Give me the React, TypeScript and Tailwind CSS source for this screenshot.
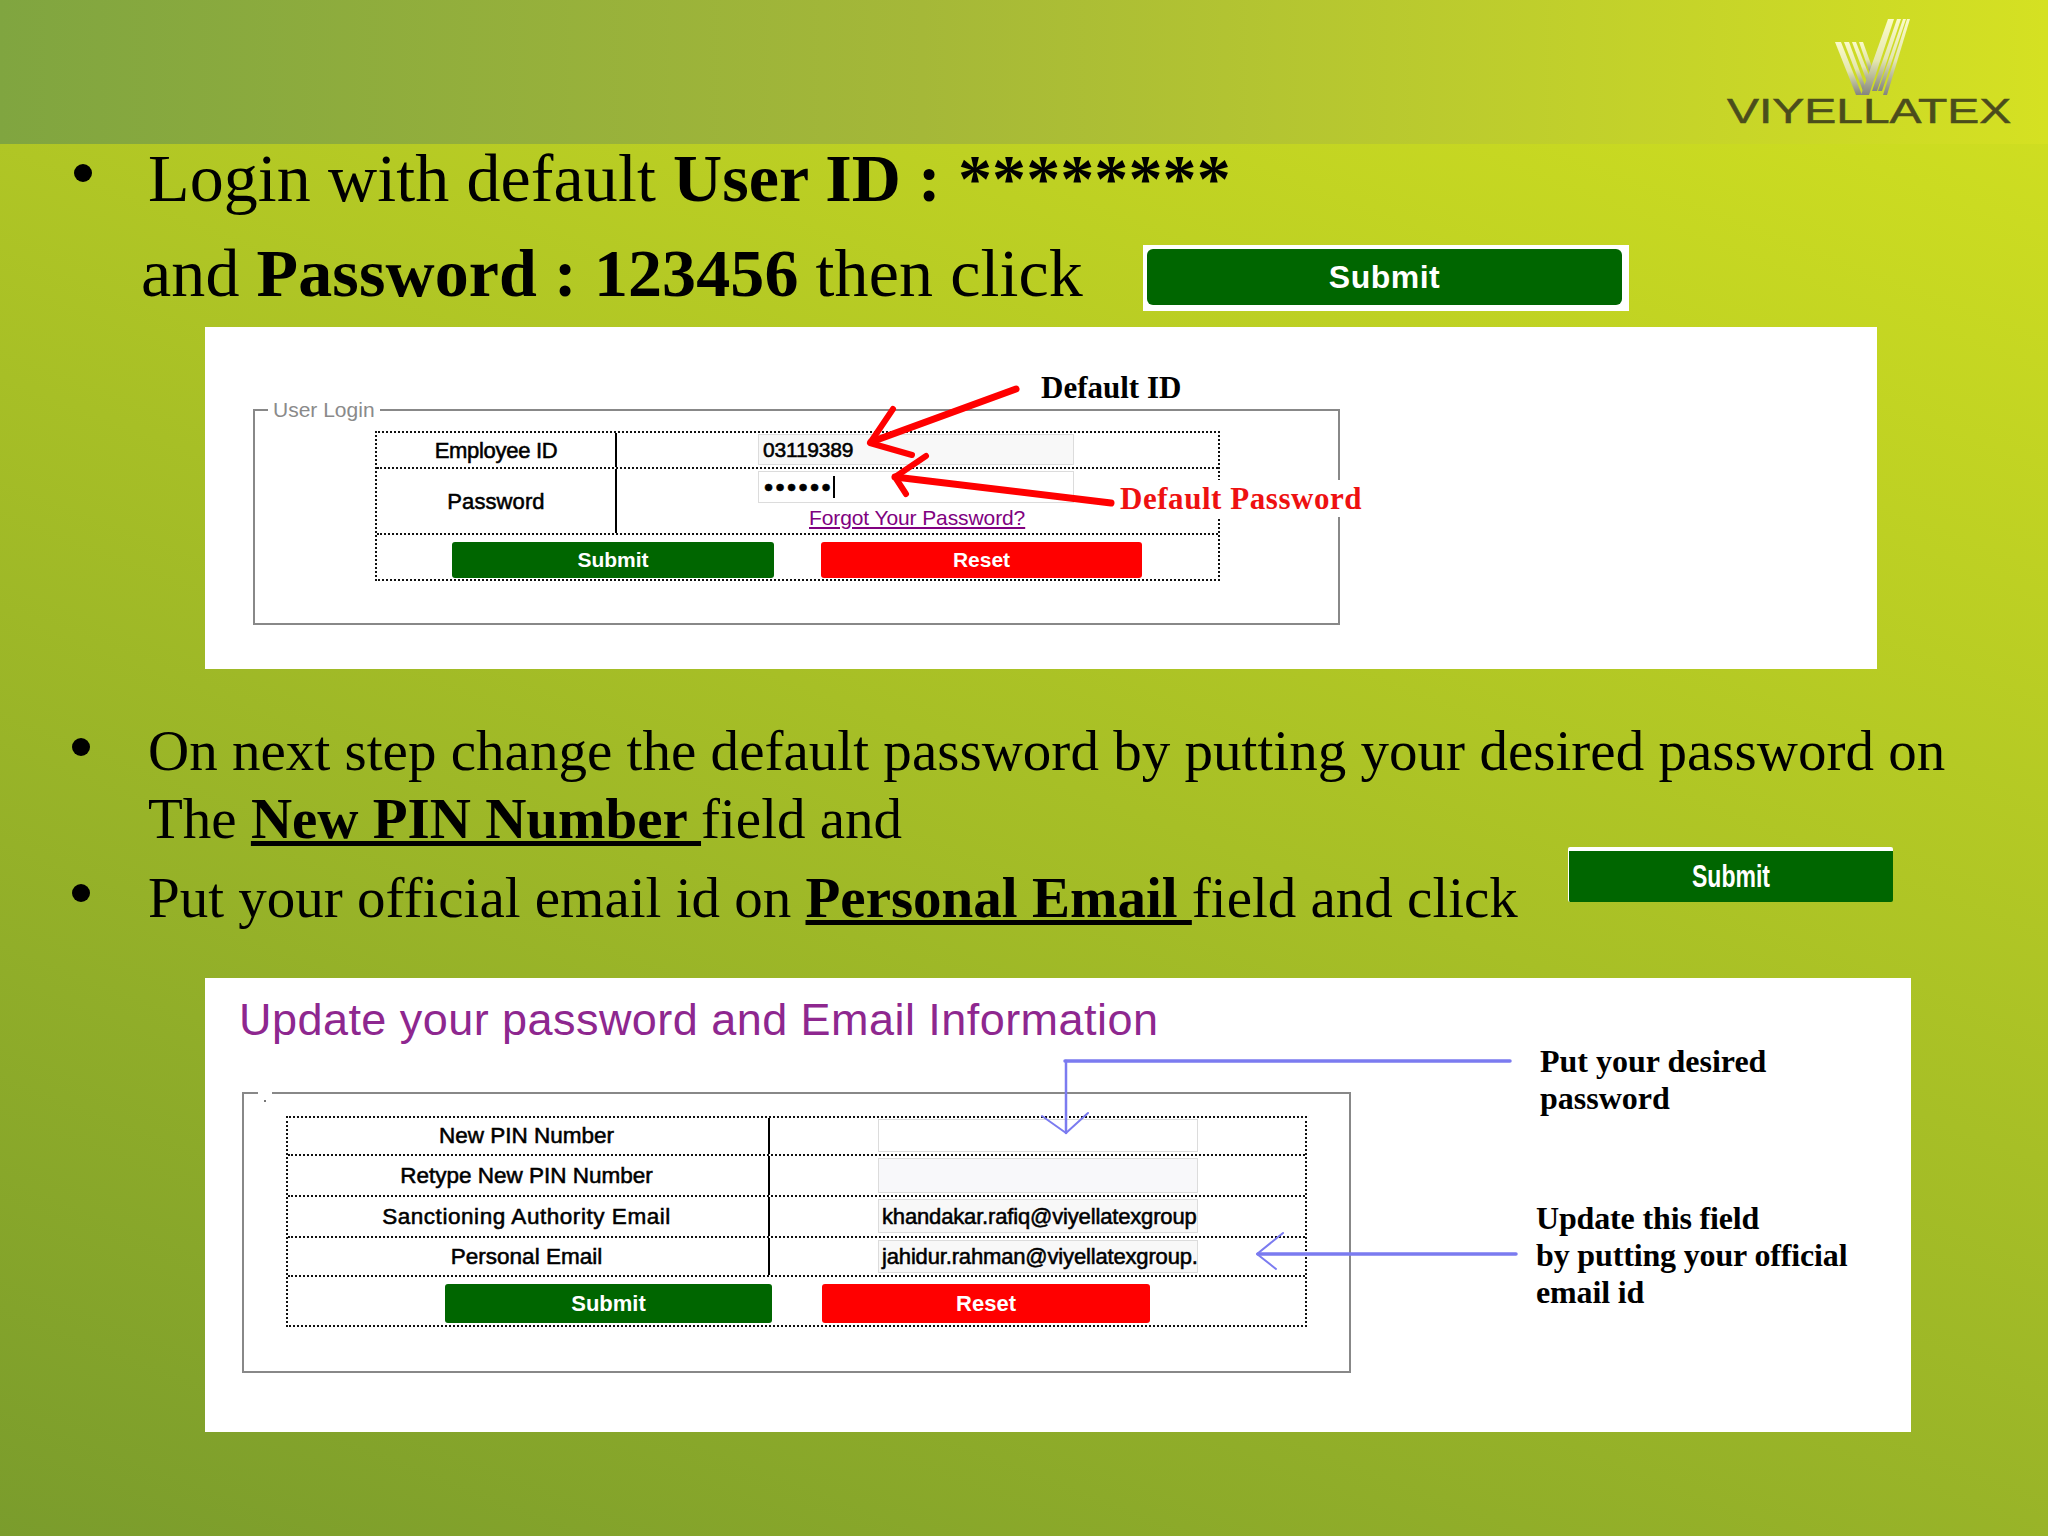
const sans = "[font-family:'Liberation_Sans',sans-serif]";
const inked = '[-webkit-text-stroke:0.55px_black]';

function Bullet({ className }: { className: string }) {
  return <span className={`absolute w-[18px] h-[18px] rounded-full bg-black ${className}`} />;
}

function Logo() {
  return (
    <div className="w-[285px] mr-[36px] mt-[19px]">
      <svg width="75" height="76" viewBox="0 0 75 76" className="ml-[108px] block">
        <defs>
          <linearGradient id="stripe" x1="0" y1="0" x2="0" y2="1">
            <stop offset="0" stopColor="#fbfbc8" />
            <stop offset="0.55" stopColor="#e4e6b0" />
            <stop offset="1" stopColor="#85857f" />
          </linearGradient>
        </defs>
        <g fill="url(#stripe)">
          <polygon points="0,23 6,23 27,76 21,76" />
          <polygon points="9,23 14,23 32,72 28,72" />
          <polygon points="17,23 21,23 37,64 34,68" />
          <polygon points="24,23 28,23 37,48 35,55" />
          <polygon points="53,0 59,0 34,76 26,76" />
          <polygon points="62,0 66,0 42,72 37,72" />
          <polygon points="68,0 71,0 47,72 43,72" />
          <polygon points="72,0 75,0 52,76 48,76" />
        </g>
      </svg>
      <div className={`${sans} -mt-[2px] text-[35px] leading-[35px] text-[#4b4d1c] origin-left scale-x-[1.37] whitespace-nowrap [-webkit-text-stroke:0.5px_#4b4d1c]`}>
        VIYELLATEX
      </div>
    </div>
  );
}

function Field({ h, bg, children }: { h: string; bg: string; children?: React.ReactNode }) {
  return (
    <div className={`${h} ${bg} border border-[#dcdcdc] overflow-hidden whitespace-nowrap flex items-center pl-[3px] text-black ${inked}`}>
      {children}
    </div>
  );
}

function FormButton({ w, h, label, bg, size }: { w: string; h: string; label: string; bg: string; size: string }) {
  return (
    <div className={`${w} ${h} ${bg} ${size} rounded-[3px] flex items-center justify-center font-bold text-white`}>{label}</div>
  );
}

function LoginPanel() {
  return (
    <div className={`${sans} relative ml-[205px] mt-[16px] w-[1672px] h-[342px] bg-white pl-[48px] pt-[82px]`}>
      <div className="relative w-[1087px] h-[216px] border-2 border-[#888888]">
        <span className="absolute left-[13px] -top-[14px] bg-white px-[5px] text-[21px] leading-[26px] text-[#8a8a8a]">User Login</span>
        <div className="ml-[120px] mt-[20px] w-[845px] border-2 border-dotted border-[#111111] text-[21px] text-black">
          <div className="grid grid-cols-[240px_1fr] h-[36px] border-b-2 border-dotted border-[#111111]">
            <div className={`border-r-2 border-black flex items-center justify-center text-[22px] tracking-[-0.3px] ${inked}`}>Employee ID</div>
            <div className="pl-[141px] pt-[1px] text-[21px] tracking-[-0.2px]">
              <Field h="h-[31px]" bg="bg-[#f8f8f8] w-[316px]"><span className="ml-[1px]">03119389</span></Field>
            </div>
          </div>
          <div className="grid grid-cols-[240px_1fr] h-[66px] border-b-2 border-dotted border-[#111111]">
            <div className={`border-r-2 border-black flex items-center justify-center text-[22px] tracking-[0.1px] ${inked}`}>Password</div>
            <div className="pl-[141px] pt-[2px]">
              <Field h="h-[32px]" bg="bg-white w-[316px] border-[#cccccc]">
                <span className="ml-[2px] text-[26px] tracking-[2.4px] leading-none">••••••</span>
                <span className="w-[2px] h-[22px] bg-black" />
              </Field>
              <a className="block ml-[51px] text-[21px] leading-[24px] mt-[3px] tracking-[-0.1px] text-[#800080] underline">Forgot Your Password?</a>
            </div>
          </div>
          <div className="flex h-[44px] pt-[7px] pl-[75px] gap-[47px]">
            <FormButton w="w-[322px]" h="h-[36px]" label="Submit" bg="bg-[#006600]" size="text-[21px]" />
            <FormButton w="w-[321px]" h="h-[36px]" label="Reset" bg="bg-[#ff0000]" size="text-[21px]" />
          </div>
        </div>
      </div>
      <div className="absolute left-[836px] top-[43px] text-[31px] leading-[36px] font-bold text-black [font-family:'Liberation_Serif',serif]">Default ID</div>
      <div className="absolute left-[908px] top-[153px] w-[256px] h-[37px] bg-white pl-[7px] text-[31px] leading-[37px] tracking-[0.55px] font-bold text-[#ee1111] whitespace-nowrap [font-family:'Liberation_Serif',serif]">Default Password</div>
    </div>
  );
}

const updateRows = [
  { label: 'New PIN Number', track: 'tracking-normal', rowH: 'h-[38px]', top: 'pt-[1px]', h: 'h-[33px]', bg: 'bg-white border-[#cccccc]', value: '' },
  { label: 'Retype New PIN Number', track: 'tracking-normal', rowH: 'h-[41px]', top: 'pt-[2px]', h: 'h-[35px]', bg: 'bg-[#f8f8fa]', value: '' },
  { label: 'Sanctioning Authority Email', track: 'tracking-[0.55px]', rowH: 'h-[41px]', top: 'pt-[2px]', h: 'h-[34px]', bg: 'bg-[#f8f8f8]', value: 'khandakar.rafiq@viyellatexgroup' },
  { label: 'Personal Email', track: 'tracking-normal', rowH: 'h-[39px]', top: 'pt-[2px]', h: 'h-[33px]', bg: 'bg-[#f8f8f8]', value: 'jahidur.rahman@viyellatexgroup.' },
];

function UpdatePanel() {
  return (
    <div className={`${sans} relative ml-[205px] mt-[46px] w-[1706px] h-[454px] bg-white pt-[19px]`}>
      <div className="ml-[34px] text-[45px] leading-[45px] tracking-[0.45px] text-[#8e278f] whitespace-nowrap">Update your password and Email Information</div>
      <div className="relative ml-[37px] mt-[50px] w-[1109px] h-[281px] border-2 border-[#888888]">
        <span className="absolute left-[14px] -top-[2px] w-[14px] h-[2px] bg-white" />
        <span className="absolute left-[20px] top-[6px] w-[2px] h-[2px] bg-[#777777]" />
        <div className="ml-[42px] mt-[22px] w-[1021px] border-2 border-dotted border-[#111111] text-[22px] text-black">
          {updateRows.map((row) => (
            <div key={row.label} className={`grid grid-cols-[482px_1fr] ${row.rowH} border-b-2 border-dotted border-[#111111]`}>
              <div className={`border-r-2 border-black flex items-center justify-center pr-[3px] text-[22.5px] whitespace-nowrap ${row.track} ${inked}`}>{row.label}</div>
              <div className={`pl-[108px] ${row.top}`}>
                <Field h={row.h} bg={`${row.bg} w-[320px]`}>
                  <span className="text-[22px] tracking-[-0.16px]">{row.value}</span>
                </Field>
              </div>
            </div>
          ))}
          <div className="flex h-[48px] pt-[7px] pl-[157px] gap-[50px]">
            <FormButton w="w-[327px]" h="h-[39px]" label="Submit" bg="bg-[#006600]" size="text-[22px]" />
            <FormButton w="w-[328px]" h="h-[39px]" label="Reset" bg="bg-[#ff0000]" size="text-[22px]" />
          </div>
        </div>
      </div>
      <div className="absolute left-[1335px] top-[65px] text-[32px] leading-[37px] font-bold text-black [font-family:'Liberation_Serif',serif]">
        Put your desired<br />password
      </div>
      <div className="absolute left-[1331px] top-[222px] text-[32px] leading-[37px] tracking-[-0.15px] font-bold text-black whitespace-nowrap [font-family:'Liberation_Serif',serif]">
        Update this field<br />by putting your official<br />email id
      </div>
    </div>
  );
}

function Arrows() {
  return (
    <svg className="absolute inset-0 pointer-events-none" width="2048" height="1536" viewBox="0 0 2048 1536" fill="none" strokeLinecap="round" strokeLinejoin="round">
      <g stroke="#ff0000">
        <path d="M1016 389 L871 442" strokeWidth="7" />
        <path d="M893 409 L870 443 L912 455" strokeWidth="6" />
        <path d="M1111 503 L895 477" strokeWidth="7" />
        <path d="M926 456 L895 477 L906 494" strokeWidth="6" />
      </g>
      <g stroke="#7b7bf0">
        <path d="M1510 1061 L1065 1061" strokeWidth="3.5" />
        <path d="M1066 1061 L1066 1133" strokeWidth="2.5" />
        <path d="M1042 1116 L1066 1133 L1088 1113" strokeWidth="2" />
        <path d="M1516 1254 L1258 1254" strokeWidth="3.5" />
        <path d="M1283 1233 L1257 1254 L1276 1269" strokeWidth="2" />
      </g>
    </svg>
  );
}

export default function App() {
  return (
    <div className="relative w-[2048px] h-[1536px] overflow-hidden bg-[linear-gradient(21deg,#7a9c2c_0%,#d4e220_100%)] text-black [font-family:'Liberation_Serif',serif]">
      <div className="flex justify-end items-start h-[144px] bg-[linear-gradient(to_right,#80a540_0%,#a5b838_45%,#d5e122_100%)]">
        <Logo />
      </div>

      <div className="relative mt-[4px] pl-[148px] h-[60px] text-[68px] leading-[60px] tracking-[0.1px] whitespace-nowrap">
        <Bullet className="left-[74px] top-[16px]" />
        Login with default <b>User ID : ********</b>
      </div>
      <div className="flex mt-[35px] pl-[141px] h-[68px] text-[68px] leading-[60px] tracking-[0.1px] whitespace-nowrap">
        <div className="w-[1002px]">and <b>Password : 123456</b> then click</div>
        <div className={`${sans} mt-[2px] w-[486px] h-[66px] bg-white p-[4px] pr-[7px]`}>
          <div className="h-[56px] rounded-[6px] bg-[#006600] flex items-center justify-center text-[32px] tracking-[0.5px] leading-none font-bold text-white">Submit</div>
        </div>
      </div>

      <LoginPanel />

      <div className="relative mt-[48px] pl-[148px] text-[57px] leading-[68px] whitespace-nowrap">
        <Bullet className="left-[72px] top-[21px]" />
        <div className="tracking-[0.03px]">On next step change the default password by putting your desired password on</div>
        <div>The <b className="underline">New PIN Number </b>field and</div>
      </div>
      <div className="relative flex mt-[11px] pl-[148px] h-[68px] text-[57px] leading-[68px] whitespace-nowrap">
        <Bullet className="left-[72px] top-[20px]" />
        <div className="w-[1420px]">Put your official email id on <b className="underline">Personal Email </b>field and click</div>
        <div className={`${sans} -mt-[17px] w-[325px] h-[55px] bg-[#006600] border-t-4 border-l border-white rounded-[2px] flex items-center justify-center text-white font-bold leading-none`}>
          <span className="inline-block text-[23px] scale-y-[1.35]">Submit</span>
        </div>
      </div>

      <UpdatePanel />
      <Arrows />
    </div>
  );
}
